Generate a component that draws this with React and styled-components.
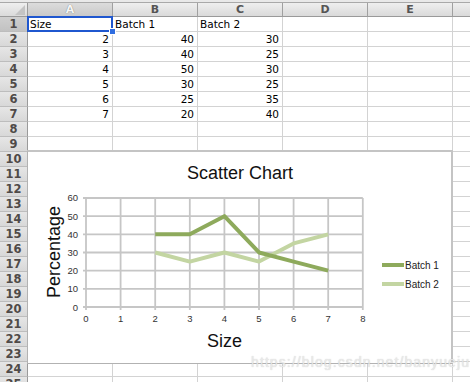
import React from "react";
import styled, { createGlobalStyle, css } from "styled-components";

const GlobalStyle = createGlobalStyle`
  html, body {
    margin: 0;
    padding: 0;
    background: #fff;
  }
`;

const Sheet = styled.div`
  position: relative;
  width: 470px;
  height: 382px;
  overflow: hidden;
  padding-top: 2px;
  box-sizing: border-box;
  background: linear-gradient(#e9e9e9, #e9e9e9) top / 100% 2px no-repeat, #fff;
`;

const Grid = styled.div`
  display: grid;
  grid-template-columns: 28px repeat(6, 85px);
  grid-template-rows: 14px;
  grid-auto-rows: 15px;
  border-top: 1px solid #a9a9a9;
  font-family: "DejaVu Sans", Verdana, sans-serif;
`;

const headerBg = css`
  background: linear-gradient(#efefef, #dadada);
  color: #555;
  font-family: "DejaVu Sans", Verdana, sans-serif;
  font-weight: bold;
  font-size: 11px;
  display: flex;
  align-items: center;
  justify-content: center;
  box-sizing: border-box;
`;

const CornerCell = styled.div`
  ${headerBg};
  position: relative;
  border-right: 1px solid #9a9a9a;
  border-bottom: 1px solid #9a9a9a;
  &::after {
    content: "";
    position: absolute;
    right: 2px;
    bottom: 1px;
    width: 0;
    height: 0;
    border-left: 10px solid transparent;
    border-bottom: 10px solid #c4c4c4;
  }
`;

const ColHeader = styled.div`
  ${headerBg};
  border-right: 1px solid #a0a0a0;
  border-bottom: 1px solid #9a9a9a;
  ${({ $selected }) =>
    $selected &&
    css`
      background: linear-gradient(#dcdcdc, #c9c9c9);
      color: #f6f6f6;
      text-shadow: 0 0 1px #666;
    `}
`;

const RowHeader = styled.div`
  ${headerBg};
  background: linear-gradient(#e6e6e6, #d8d8d8);
  color: #4f4a48;
  font-size: 11.5px;
  border-right: 1px solid #9a9a9a;
  border-bottom: 1px solid #bdbdbd;
  ${({ $selected }) =>
    $selected &&
    css`
      background: linear-gradient(#cfcfcf, #c2c2c2);
    `}
`;

const Cell = styled.div`
  position: relative;
  box-sizing: border-box;
  border-right: 1px solid #d3d3d3;
  border-bottom: 1px solid #d3d3d3;
  font-size: 10.5px;
  line-height: 14px;
  color: #000;
  padding: 0 3px 0 2px;
  text-align: ${({ $align }) => $align || "left"};
  white-space: nowrap;
  ${({ $active }) =>
    $active &&
    css`
      &::after {
        content: "";
        position: absolute;
        left: -1px;
        top: -1px;
        right: -1px;
        bottom: -1px;
        border: 2px solid #1f57cf;
      }
    `}
`;

const FillHandle = styled.span`
  position: absolute;
  right: -4px;
  bottom: -4px;
  width: 5px;
  height: 5px;
  background: #2f6de0;
  border: 1px solid #fff;
  z-index: 2;
`;

const ChartPanel = styled.div`
  position: absolute;
  left: 27px;
  top: 150px;
  width: 426px;
  height: 214px;
  box-sizing: border-box;
  background: #fff;
  border: 1px solid #b2b2b2;
  border-top: 2px solid #c4c4c4;
  border-right: 2px solid #c4c4c4;
`;

const ChartSvg = styled.svg`
  display: block;
  font-family: "Liberation Sans", Arial, sans-serif;
`;

const Watermark = styled.div`
  position: absolute;
  left: 251px;
  top: 354px;
  font-family: "Liberation Sans", Arial, sans-serif;
  font-size: 14px;
  letter-spacing: 1.1px;
  color: rgba(236, 236, 236, 0.9);
  text-shadow: 0 0 1px rgba(140, 140, 140, 0.45);
  white-space: nowrap;
`;

const columns = ["A", "B", "C", "D", "E", "F"];

const data = [
  ["Size", "Batch 1", "Batch 2"],
  [2, 40, 30],
  [3, 40, 25],
  [4, 50, 30],
  [5, 30, 25],
  [6, 25, 35],
  [7, 20, 40],
];

const batch1 = [[2, 40], [3, 40], [4, 50], [5, 30], [6, 25], [7, 20]];
const batch2 = [[2, 30], [3, 25], [4, 30], [5, 25], [6, 35], [7, 40]];

const X0 = 58;
const XS = 34.6;
const Y0 = 155;
const YS = 18.17;
const px = (v) => X0 + v * XS;
const py = (v) => Y0 - (v / 10) * YS;
const toPoints = (list) => list.map(([x, y]) => `${px(x)},${py(y)}`).join(" ");

function ScatterChart() {
  const xs = [0, 1, 2, 3, 4, 5, 6, 7, 8];
  const ys = [0, 10, 20, 30, 40, 50, 60];
  return (
    <ChartPanel>
      <ChartSvg width="424" height="211" viewBox="0 0 424 211">
        <text x="212" y="27" fontSize="18" textAnchor="middle" fill="#111">
          Scatter Chart
        </text>
        {ys.map((v) => (
          <g key={"y" + v}>
            <line x1={X0 - 3} x2={px(8)} y1={py(v)} y2={py(v)} stroke="#c6c6c6" strokeWidth="1.8" />
            <text x="50" y={py(v) + 3.5} fontSize="9.5" textAnchor="end" fill="#333">
              {v}
            </text>
          </g>
        ))}
        {xs.map((v) => (
          <g key={"x" + v}>
            <line x1={px(v)} x2={px(v)} y1={py(60)} y2={py(0) + 3} stroke="#c6c6c6" strokeWidth="1.8" />
            <text x={px(v)} y="170" fontSize="9.5" textAnchor="middle" fill="#333">
              {v}
            </text>
          </g>
        ))}
        <polyline points={toPoints(batch2)} fill="none" stroke="#c3d5a2" strokeWidth="4" strokeLinejoin="round" />
        <polyline points={toPoints(batch1)} fill="none" stroke="#8eaa5c" strokeWidth="4" strokeLinejoin="round" />
        <text x="32" y="100" fontSize="18" textAnchor="middle" fill="#111" transform="rotate(-90 32 100)">
          Percentage
        </text>
        <text x="196.5" y="195" fontSize="18" textAnchor="middle" fill="#111">
          Size
        </text>
        <line x1="354" x2="376" y1="113" y2="113" stroke="#8eaa5c" strokeWidth="4" />
        <text x="377" y="117" fontSize="10" fill="#222">Batch 1</text>
        <line x1="354" x2="376" y1="132" y2="132" stroke="#c3d5a2" strokeWidth="4" />
        <text x="377" y="136" fontSize="10" fill="#222">Batch 2</text>
      </ChartSvg>
    </ChartPanel>
  );
}

export default function App() {
  const rows = Array.from({ length: 25 }, (_, i) => i + 1);
  return (
    <>
      <GlobalStyle />
      <Sheet>
        <Grid>
          <CornerCell />
          {columns.map((c) => (
            <ColHeader key={c} $selected={c === "A"}>
              {c}
            </ColHeader>
          ))}
          {rows.map((r) => (
            <React.Fragment key={r}>
              <RowHeader $selected={r === 1}>{r}</RowHeader>
              {columns.map((c, ci) => {
                const value = data[r - 1] ? data[r - 1][ci] : undefined;
                const isNumber = typeof value === "number";
                const active = r === 1 && ci === 0;
                return (
                  <Cell key={c} $align={isNumber ? "right" : "left"} $active={active}>
                    {value}
                    {active && <FillHandle />}
                  </Cell>
                );
              })}
            </React.Fragment>
          ))}
        </Grid>
        <ScatterChart />
        <Watermark>https://blog.csdn.net/banyueju</Watermark>
      </Sheet>
    </>
  );
}
